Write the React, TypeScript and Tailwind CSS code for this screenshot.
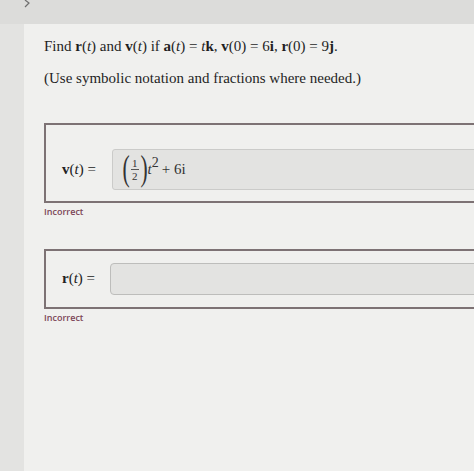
import React from 'react';

const serif = { fontFamily: '"Liberation Serif", "Times New Roman", serif' };
const sans = { fontFamily: '"Open Sans", sans-serif' };

function T() {
  return <i>t</i>;
}

function Bold({ children }: { children: React.ReactNode }) {
  return <b className="font-bold">{children}</b>;
}

export default function App() {
  return (
    <div className="w-[474px] h-[471px] overflow-hidden bg-[#dcdcda] relative">
      {/* chevron peeking at the top */}
      <svg className="absolute left-[23px] top-0" width="9" height="8" viewBox="0 0 9 8">
        <polyline points="2,0 6,3 2,7" fill="none" stroke="#6f6f6f" strokeWidth="1.2" />
      </svg>
      <div className="flex h-full pt-[24px]">
        <div className="w-[24px] shrink-0 bg-[#e3e3e1]" />
        <div className="flex-1 bg-[#f0f0ee] pl-[20px] pt-[12px] overflow-hidden" style={serif}>
          <p className="text-[15px] leading-[20px] text-[#1f1f1f]">
            Find <Bold>r</Bold>(<T />) and <Bold>v</Bold>(<T />) if <Bold>a</Bold>(<T />) = <T />
            <Bold>k</Bold>, <Bold>v</Bold>(0) = 6<Bold>i</Bold>, <Bold>r</Bold>(0) = 9<Bold>j</Bold>.
          </p>
          <p className="mt-[12px] text-[15px] leading-[20px] text-[#1f1f1f]">
            (Use symbolic notation and fractions where needed.)
          </p>

          {/* v(t) answer */}
          <div className="mt-[35px] mr-[-20px] h-[80px] border-2 border-[#7d7274] flex items-start pt-[24px] pl-[16px]">
            <div className="flex items-center h-[41px] w-[50px] shrink-0 text-[15px] text-[#222]">
              <span>
                <Bold>v</Bold>(<T />) =
              </span>
            </div>
            <div className="flex-1 h-[41px] bg-[#e3e3e1] border border-[#cbcbc9] rounded-[3px] flex items-center pl-[7px] text-[15px] text-[#333]">
              <span className="text-[36px] font-light leading-none scale-x-[0.6] inline-block translate-y-[-2px]">(</span>
              <span className="inline-flex flex-col items-center text-[11px] leading-[12px] mx-[-1px]">
                <span>1</span>
                <span className="border-t border-[#555] px-[1px]">2</span>
              </span>
              <span className="text-[36px] font-light leading-none scale-x-[0.6] inline-block translate-y-[-2px]">)</span>
              <span className="relative ml-[-2px]">
                <i>t</i>
                <span className="text-[14px] relative top-[-7px]">2</span>
              </span>
              <span className="ml-[3px]">+ 6i</span>
            </div>
          </div>
          <div className="mt-[2px] text-[9px] font-semibold text-[#7b4556]" style={sans}>
            Incorrect
          </div>

          {/* r(t) answer */}
          <div className="mt-[30px] mr-[-20px] h-[60px] border-2 border-[#7d7274] flex items-center pl-[16px]">
            <span className="w-[48px] shrink-0 text-[15px] text-[#222]">
              <Bold>r</Bold>(<T />) =
            </span>
            <div className="flex-1 h-[32px] bg-[#e3e3e1] border border-[#bdbdbb] rounded-[4px]" />
          </div>
          <div className="mt-[2px] text-[9px] font-semibold text-[#7b4556]" style={sans}>
            Incorrect
          </div>
        </div>
      </div>
    </div>
  );
}
